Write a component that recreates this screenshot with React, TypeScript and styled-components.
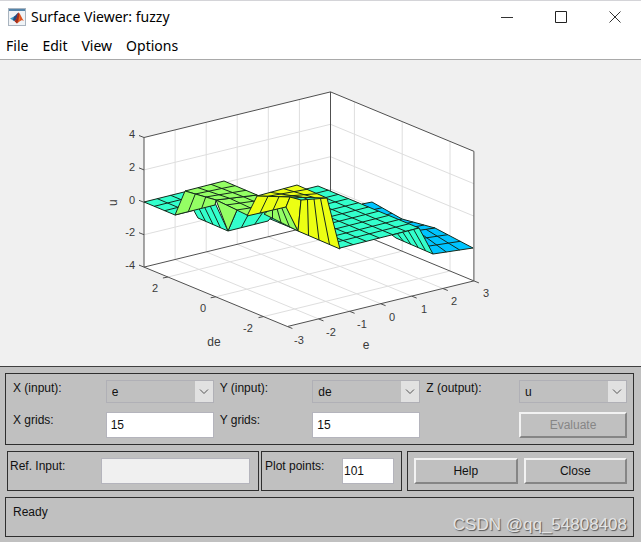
import React from "react";
import styled, { createGlobalStyle } from "styled-components";

const GlobalStyle = createGlobalStyle`
  * { box-sizing: border-box; }
  body {
    margin: 0;
    background: #c0c0c0;
    color: #111;
    font: 12px/16px "Liberation Sans", Arial, sans-serif;
  }
`;

const Window = styled.div`
  position: relative;
  display: flex;
  flex-direction: column;
  min-height: 100vh;
`;

const TitleBar = styled.header`
  display: flex;
  align-items: center;
  height: 32px;
  padding-left: 8px;
  background: #fff;
  border-top: 1px solid #d4d4d8;
`;

const Title = styled.h1`
  flex: 1;
  margin: 0 0 0 5px;
  font: 400 14px/20px "Noto Sans", sans-serif;
  color: #000;
`;

const WindowControls = styled.div`
  display: flex;
  gap: 8px;
  padding-right: 3px;
`;

const WindowButton = styled.button`
  display: grid;
  place-items: center;
  width: 46px;
  height: 30px;
  padding: 0;
  border: 0;
  background: none;
`;

const MenuBar = styled.nav`
  display: flex;
  gap: 14px;
  height: 28px;
  padding: 4px 6px 0;
  background: #fff;
  border-bottom: 1px solid #a9a9a9;
`;

const MenuButton = styled.button`
  height: 20px;
  padding: 0;
  border: 0;
  background: none;
  color: #000;
  font: 14px/20px "Noto Sans", sans-serif;
`;

const PlotArea = styled.main`
  flex: 1;
  background: #f0f0f0;
  svg { display: block; width: 100%; }
  text { font-family: "Liberation Sans", Arial, sans-serif; fill: #3a3a3a; }
`;

const Panel = styled.form`
  display: flex;
  flex-direction: column;
  gap: 6px;
  padding: 6px 7px 6px 5px;
  background: #c0c0c0;
  border-top: 1px solid #404040;
`;

const Frame = styled.section`
  border: 1px solid #2e2e2e;
`;

const AxisFrame = styled(Frame)`
  display: grid;
  grid-template-columns: repeat(3, 1fr);
  gap: 9px 6px;
  padding: 6px 6px 6px 7px;
`;

const MiddleRow = styled.div`
  display: grid;
  grid-template-columns: 252fr 143fr 232fr;
  padding-left: 2px;
`;

const RefFrame = styled(Frame)`
  display: flex;
  justify-content: space-between;
  padding: 6px 8px 6px 2px;
`;

const PointsFrame = styled(Frame)`
  display: flex;
  justify-content: space-between;
  margin-left: 2px;
  padding: 6px 7px 6px 3px;
`;

const ActionsFrame = styled(Frame)`
  display: flex;
  gap: 6px;
  margin-left: 5px;
  padding: 6px;
`;

const StatusFrame = styled(Frame)`
  height: 40px;
  padding: 6px 7px;
`;

const Field = styled.div`
  display: flex;
  justify-content: space-between;
`;

const Label = styled.label`
  white-space: nowrap;
`;

const TextInput = styled.input<{ $width: number; $inset?: number }>`
  width: ${(p) => p.$width}px;
  height: 26px;
  padding: 0 ${(p) => p.$inset ?? 4}px;
  border: 1px solid #b4b4bc;
  border-radius: 0;
  background: #fff;
  color: #111;
  font: 12px/16px "Liberation Sans", Arial, sans-serif;
  &:disabled { background: #f0f0f0; }
`;

const SelectBox = styled.div`
  display: grid;
  grid-template-columns: 1fr 18px;
  width: 108px;
  height: 23px;
  border: 1px solid #b0b0b6;
  svg {
    grid-area: 1 / 2;
    width: 18px;
    height: 21px;
    background: #e1e1e1;
    pointer-events: none;
  }
`;

const Select = styled.select`
  grid-area: 1 / 1 / 2 / 3;
  appearance: none;
  padding: 0 22px 0 5px;
  border: 0;
  border-radius: 0;
  background: transparent;
  color: #111;
  font: 12px/16px "Liberation Sans", Arial, sans-serif;
`;

const PushButton = styled.button<{ $width?: number }>`
  ${(p) => (p.$width ? `width: ${p.$width}px;` : "flex: 1;")}
  height: 26px;
  padding: 0;
  border: 2px solid;
  border-color: #f2f2f2 #858585 #858585 #f2f2f2;
  background: #c0c0c0;
  color: #111;
  font: 12px/16px "Liberation Sans", Arial, sans-serif;
  &:disabled { color: #868686; }
`;

const Watermark = styled.span`
  position: absolute;
  right: 14px;
  bottom: 8px;
  color: #e4e4e4;
  font: 17px/20px "Liberation Sans", Arial, sans-serif;
  text-shadow: 1px 1px 1px #555;
  pointer-events: none;
`;

type Point = [number, number];

const TEAL = "#33ffcc";
const GREEN = "#94ff64";
const YELLOW = "#ecff13";
const BLUE = "#00c4ff";

const project = (e: number, de: number, u: number): Point => [
  144 + 31.08 * (e + 3) + 23.9 * (3 - de),
  202.3 - 7.6 * (e + 3) + 9.9 * (3 - de) - 16.2 * u,
];

const toPath = (points: Point[]) =>
  "M" + points.map(([x, y]) => `${x.toFixed(1)} ${y.toFixed(1)}`).join("L");

const mix = (a: Point, b: Point, t: number): Point => [
  a[0] + (b[0] - a[0]) * t,
  a[1] + (b[1] - a[1]) * t,
];

interface PatchData {
  corners: [Point, Point, Point, Point];
  across: number;
  down: number;
  fill: string;
}

function Patch({ corners, across, down, fill }: PatchData) {
  const [a, b, c, d] = corners;
  const lines: Point[][] = [];
  for (let i = 1; i < across; i++) lines.push([mix(a, b, i / across), mix(d, c, i / across)]);
  for (let j = 1; j < down; j++) lines.push([mix(a, d, j / down), mix(b, c, j / down)]);
  return (
    <path
      d={toPath(corners) + "Z" + lines.map(toPath).join("")}
      fill={fill}
      stroke="#142a1c"
      strokeLinejoin="round"
    />
  );
}

const patches: PatchData[] = [
  { corners: [[362, 204], [372, 202], [402, 219], [392, 222]], across: 1, down: 3, fill: BLUE },
  { corners: [[394, 221], [402, 219], [435, 228], [419, 231]], across: 1, down: 3, fill: BLUE },
  { corners: [[408, 232], [435, 228], [473, 248], [433, 254]], across: 3, down: 3, fill: BLUE },
  { corners: [[239, 206], [318, 186], [419, 228], [340, 248]], across: 6, down: 10, fill: TEAL },
  { corners: [[392, 235], [419, 228], [433, 254], [396, 238]], across: 5, down: 1, fill: TEAL },
  { corners: [[144, 202], [184, 192], [215, 205], [175, 215]], across: 3, down: 3, fill: TEAL },
  { corners: [[193, 209], [215, 203], [228, 231], [198, 218]], across: 4, down: 1, fill: TEAL },
  { corners: [[237, 210], [280, 207], [268, 221], [228, 231]], across: 3, down: 1, fill: TEAL },
  { corners: [[216, 200], [257, 195], [288, 208], [247, 215]], across: 3, down: 3, fill: GREEN },
  { corners: [[185, 191], [224, 181], [257, 195], [216, 200]], across: 3, down: 3, fill: GREEN },
  { corners: [[216, 200], [237, 210], [228, 231], [228, 231]], across: 1, down: 1, fill: GREEN },
  { corners: [[185, 191], [216, 200], [215, 205], [175, 215]], across: 3, down: 1, fill: GREEN },
  { corners: [[268, 211], [286, 206], [298, 231], [264, 214]], across: 4, down: 1, fill: GREEN },
  { corners: [[257, 196], [297, 185], [327, 198], [290, 197]], across: 3, down: 3, fill: YELLOW },
  { corners: [[257, 196], [290, 197], [286, 207], [247, 216]], across: 3, down: 1, fill: YELLOW },
  { corners: [[290, 197], [301, 200], [298, 231], [286, 207]], across: 1, down: 1, fill: YELLOW },
  { corners: [[301, 200], [327, 198], [340, 249], [298, 231]], across: 4, down: 1, fill: YELLOW },
];

const range = [-3, 3];
const wallGrid: Point[][] = [
  ...[-2, -1, 0, 1, 2].map((e) => [project(e, 3, 4), project(e, 3, -4), project(e, -3, -4)]),
  ...[-2, 0, 2].map((de) => [project(3, de, 4), project(3, de, -4), project(-3, de, -4)]),
  ...[-2, 0, 2].map((u) => [project(-3, 3, u), project(3, 3, u), project(3, -3, u)]),
];

const tick = ([x, y]: Point, dx: number, dy: number): Point[] => [[x, y], [x + dx, y + dy]];
const ticks: Point[][] = [
  ...[-3, -2, -1, 0, 1, 2, 3].map((e) => tick(project(e, -3, -4), 5, 2)),
  ...[-2, 0, 2].map((de) => tick(project(-3, de, -4), -5, 1)),
  ...[-4, -2, 0, 2, 4].map((u) => tick(project(-3, 3, u), -5, -2)),
];

const frontLabels: [string, number, number][] = [
  ["2", 155, 292], ["0", 203, 312], ["-2", 248, 332],
  ["-3", 299, 344], ["-2", 331, 336], ["-1", 362, 328], ["0", 392, 321],
  ["1", 424, 313], ["2", 454, 305], ["3", 486, 297],
];

function SurfacePlot() {
  return (
    <svg viewBox="0 60 641 306" role="img" aria-label="Surface of u over e and de">
      <path
        d={toPath([project(-3, 3, 4), project(3, 3, 4), project(3, -3, 4), project(3, -3, -4), project(-3, -3, -4), project(-3, 3, -4)]) + "Z"}
        fill="#fff"
      />
      <path d={wallGrid.map(toPath).join("")} fill="none" stroke="#dedede" />
      <path
        d={
          range.map((e) => toPath([project(e, 3, 4), project(e, 3, -4)])).join("") +
          toPath([project(-3, 3, 4), project(3, 3, 4), project(3, -3, 4), project(3, -3, -4), project(-3, -3, -4), project(-3, 3, -4), project(3, 3, -4), project(3, -3, -4)]) +
          ticks.map(toPath).join("")
        }
        fill="none"
        stroke="#505050"
      />
      {patches.map((patch, i) => <Patch key={i} {...patch} />)}
      {[4, 2, 0, -2, -4].map((u, i) => (
        <text key={u} x={135} y={138 + i * 33 - (i > 2 ? 1 : 0)} fontSize={11} textAnchor="end">{u}</text>
      ))}
      {frontLabels.map(([text, x, y]) => (
        <text key={`${x}`} x={x} y={y} fontSize={11} textAnchor="middle">{text}</text>
      ))}
      <text x={214} y={346} fontSize={12} textAnchor="middle">de</text>
      <text x={366} y={349} fontSize={12} textAnchor="middle">e</text>
      <text transform="translate(117 206) rotate(-90)" fontSize={12}>u</text>
    </svg>
  );
}

function AppIcon() {
  return (
    <svg width="18" height="18" viewBox="0 0 18 18" aria-hidden="true">
      <rect x=".5" y=".5" width="17" height="17" fill="#f0f3f6" stroke="#a9b4bf" />
      <path d="M1 1h16v2H1z" fill="#5585ab" />
      <path d="M2 10.5 6 8.5 8.5 11 6 13z" fill="#3d9bc6" />
      <path d="M6 8.5C8 7.500 9 5 10.500 4.500L9 11 6.500 13 5 12z" fill="#244a80" />
      <path d="M10.500 4.500C12 5 13.500 10 16 13c-2-1.500-3-.5-4.500.5L9 15.500 6.500 13C9 12 9 7 10.500 4.500z" fill="#dd5320" />
      <path d="M10.500 4.500c.8 2 .6 6-1.500 11L6.500 13C9 12 9 7 10.500 4.500z" fill="#9e2b1d" />
      <path d="M11 7c1 2 1 4-.5 7 2-3 2-4 .5-7z" fill="#ffb52b" />
    </svg>
  );
}

function SelectField({ id, label, value }: { id: string; label: string; value: string }) {
  return (
    <Field>
      <Label htmlFor={id}>{label}</Label>
      <SelectBox>
        <Select id={id} defaultValue={value}>
          <option>{value}</option>
        </Select>
        <svg viewBox="0 0 18 21" aria-hidden="true">
          <path d="m5 8.500 4 4 4-4" fill="none" stroke="#555" />
        </svg>
      </SelectBox>
    </Field>
  );
}

function GridField({ id, label }: { id: string; label: string }) {
  return (
    <Field>
      <Label htmlFor={id}>{label}</Label>
      <TextInput id={id} $width={108} defaultValue="15" />
    </Field>
  );
}

export default function App() {
  return (
    <Window>
      <GlobalStyle />
      <TitleBar>
        <AppIcon />
        <Title>Surface Viewer: fuzzy</Title>
        <WindowControls>
          <WindowButton aria-label="Minimize">
            <svg width="12" height="12"><path d="M0 6.500h12" stroke="#333" /></svg>
          </WindowButton>
          <WindowButton aria-label="Maximize">
            <svg width="12" height="12"><path d="M.5.5h11v11H.5z" fill="none" stroke="#222" /></svg>
          </WindowButton>
          <WindowButton aria-label="Close window">
            <svg width="12" height="12"><path d="m.5.5 11 11m0-11-11 11" stroke="#333" /></svg>
          </WindowButton>
        </WindowControls>
      </TitleBar>
      <MenuBar>
        {["File", "Edit", "View", "Options"].map((name) => (
          <MenuButton key={name}>{name}</MenuButton>
        ))}
      </MenuBar>
      <PlotArea>
        <SurfacePlot />
      </PlotArea>
      <Panel onSubmit={(event) => event.preventDefault()}>
        <AxisFrame>
          <SelectField id="x-input" label="X (input):" value="e" />
          <SelectField id="y-input" label="Y (input):" value="de" />
          <SelectField id="z-output" label="Z (output):" value="u" />
          <GridField id="x-grids" label="X grids:" />
          <GridField id="y-grids" label="Y grids:" />
          <Field>
            <span />
            <PushButton type="button" $width={108} disabled>Evaluate</PushButton>
          </Field>
        </AxisFrame>
        <MiddleRow>
          <RefFrame>
            <Label htmlFor="ref-input">Ref. Input:</Label>
            <TextInput id="ref-input" $width={149} disabled />
          </RefFrame>
          <PointsFrame>
            <Label htmlFor="plot-points">Plot points:</Label>
            <TextInput id="plot-points" $width={52} $inset={1} defaultValue="101" />
          </PointsFrame>
          <ActionsFrame>
            <PushButton type="button">Help</PushButton>
            <PushButton type="button">Close</PushButton>
          </ActionsFrame>
        </MiddleRow>
        <StatusFrame role="status">Ready</StatusFrame>
      </Panel>
      <Watermark>CSDN @qq_54808408</Watermark>
    </Window>
  );
}
